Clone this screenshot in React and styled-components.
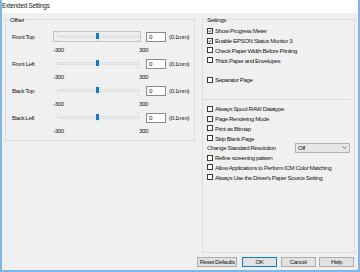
import styled, { createGlobalStyle } from "styled-components";

const GlobalStyle = createGlobalStyle`
  html, body { margin: 0; padding: 0; }
  body {
    background: #f0f0f0;
    font-family: "Liberation Sans", Arial, sans-serif;
  }
  * { box-sizing: border-box; }
`;

const offsets = ["Front Top", "Front Left", "Back Top", "Back Left"];

const topSettings = [
  { label: "Show Progress Meter", checked: true },
  { label: "Enable EPSON Status Monitor 3", checked: true },
  { label: "Check Paper Width Before Printing" },
  { label: "Thick Paper and Envelopes" },
  { spacer: true },
  { label: "Separator Page" },
];

const lowerSettings = [
  "Always Spool RAW Datatype",
  "Page Rendering Mode",
  "Print as Bitmap",
  "Skip Blank Page",
];

const lastSettings = [
  "Refine screening pattern",
  "Allow Applications to Perform ICM Color Matching",
  "Always Use the Driver's Paper Source Setting",
];

const Window = styled.div`
  width: 360px;
  height: 272px;
  display: flex;
  flex-direction: column;
  background: #f0f0f0;
  border: 2px solid #7cb6ea;
  border-top: none;
  color: #1a1a1a;
  font-size: 6.2px;
  letter-spacing: -0.42px;
`;

const TitleBar = styled.div`
  height: 13px;
  background: #fff;
  line-height: 12px;
  font-size: 6.4px;
  letter-spacing: -0.25px;
  white-space: nowrap;
`;

const Content = styled.div`
  flex: 1;
  display: flex;
  flex-direction: column;
  padding: 6px 3px 0 3px;
`;

const Panels = styled.div`
  display: flex;
  align-items: flex-start;
  gap: 7px;
`;

const Group = styled.div`
  position: relative;
  width: ${(p) => p.$w}px;
  height: ${(p) => p.$h}px;
  border: 1px solid #dcdcdc;
`;

const Caption = styled.span`
  position: absolute;
  top: -4.5px;
  left: 3px;
  padding: 0 1px;
  line-height: 8px;
  background: #f0f0f0;
`;

const OffsetList = styled.div`
  display: flex;
  flex-direction: column;
  gap: 4px;
  padding: 11px 0 0 6px;
`;

const OffsetItem = styled.div`
  display: flex;
  flex-direction: column;
  gap: 4px;
`;

const SliderRow = styled.div`
  display: flex;
  align-items: center;
  height: 11px;
`;

const RowLabel = styled.span`
  width: 41px;
  white-space: nowrap;
`;

const SliderBox = styled.div`
  width: 88px;
  height: 11px;
  border: 1px solid ${(p) => (p.$focused ? "#c6c6c6" : "transparent")};
  display: flex;

  svg {
    display: block;
  }
`;

const NumberBox = styled.input`
  width: 20px;
  height: 10px;
  margin: 0 0 0 5px;
  padding: 0 0 0 2px;
  border: 1px solid #8a8a8a;
  background: #fff;
  font: inherit;
  line-height: 8px;
  color: #1a1a1a;
  outline: none;
`;

const Unit = styled.span`
  margin-left: 3px;
  white-space: nowrap;
`;

const ScaleRow = styled.div`
  display: flex;
  justify-content: space-between;
  width: 95px;
  height: 8px;
  line-height: 8px;
  margin-left: 41px;
`;

const SettingsList = styled.div`
  display: flex;
  flex-direction: column;
  padding: 6px 4px 0 4px;
`;

const SettingRow = styled.div`
  display: flex;
  align-items: center;
  height: 9.75px;
  white-space: nowrap;
`;

const CheckBox = styled.span`
  width: 6px;
  height: 6px;
  margin-right: 2px;
  border: 1px solid #3a3a3a;
  background: #fff;
  display: flex;
  align-items: center;
  justify-content: center;
  flex-shrink: 0;

  svg {
    display: block;
  }
`;

const Divider = styled.div`
  height: 1px;
  background: #dcdcdc;
  margin: 14px 0 4.5px -4px;
`;

const Dropdown = styled.div`
  margin-left: auto;
  width: 55px;
  height: 10px;
  display: flex;
  align-items: center;
  justify-content: space-between;
  padding: 0 2px;
  background: #e6e6e6;
  border: 1px solid #b4b4b4;

  svg {
    display: block;
  }
`;

const ButtonBar = styled.div`
  display: flex;
  justify-content: flex-end;
  gap: 3.5px;
  margin-top: 4px;
  padding-right: 1px;
`;

const Button = styled.div`
  width: ${(p) => p.$w}px;
  height: 9.5px;
  margin-right: ${(p) => (p.$gapRight ? "1.5px" : "0")};
  display: flex;
  align-items: center;
  justify-content: center;
  white-space: nowrap;
  background: #e1e1e1;
  border: 1px solid ${(p) => (p.$primary ? "#0a7ad6" : "#adadad")};
`;

function Slider() {
  return (
    <svg width="86" height="9" viewBox="0 0 86 9">
      <rect x="3" y="3.5" width="82" height="2" fill="#e7eaea" stroke="#d4d4d4" strokeWidth="0.5" />
      <rect x="3" y="0" width="0.8" height="1" fill="#b8b8b8" />
      <rect x="84" y="0" width="0.8" height="1" fill="#b8b8b8" />
      <rect x="3" y="8" width="0.8" height="1" fill="#b8b8b8" />
      <rect x="43" y="8" width="0.8" height="1" fill="#b8b8b8" />
      <rect x="84" y="8" width="0.8" height="1" fill="#b8b8b8" />
      <rect x="42" y="1" width="3" height="6" fill="#0a7ad6" />
    </svg>
  );
}

function Check({ checked }) {
  return (
    <CheckBox>
      {checked && (
        <svg width="4" height="4" viewBox="0 0 4 4">
          <path d="M0.4 2 L1.5 3.1 L3.6 0.6" fill="none" stroke="#222" strokeWidth="0.8" />
        </svg>
      )}
    </CheckBox>
  );
}

function App() {
  return (
    <>
      <GlobalStyle />
      <Window>
        <TitleBar>Extended Settings</TitleBar>
        <Content>
          <Panels>
            <Group $w={190} $h={122}>
              <Caption>Offset</Caption>
              <OffsetList>
                {offsets.map((name, i) => (
                  <OffsetItem key={name}>
                    <SliderRow>
                      <RowLabel>{name}</RowLabel>
                      <SliderBox $focused={i === 0}>
                        <Slider />
                      </SliderBox>
                      <NumberBox readOnly value="0" />
                      <Unit>(0.1mm)</Unit>
                    </SliderRow>
                    <ScaleRow>
                      <span>-300</span>
                      <span>300</span>
                    </ScaleRow>
                  </OffsetItem>
                ))}
              </OffsetList>
            </Group>

            <Group $w={153} $h={234}>
              <Caption>Settings</Caption>
              <SettingsList>
                {topSettings.map((s, i) =>
                  s.spacer ? (
                    <SettingRow key={i} />
                  ) : (
                    <SettingRow key={i}>
                      <Check checked={s.checked} />
                      {s.label}
                    </SettingRow>
                  )
                )}
                <Divider />
                {lowerSettings.map((label) => (
                  <SettingRow key={label}>
                    <Check />
                    {label}
                  </SettingRow>
                ))}
                <SettingRow>
                  Change Standard Resolution
                  <Dropdown>
                    Off
                    <svg width="5" height="3" viewBox="0 0 5 3">
                      <polyline points="0.5,0.5 2.5,2.5 4.5,0.5" fill="none" stroke="#444" strokeWidth="0.7" />
                    </svg>
                  </Dropdown>
                </SettingRow>
                {lastSettings.map((label) => (
                  <SettingRow key={label}>
                    <Check />
                    {label}
                  </SettingRow>
                ))}
              </SettingsList>
            </Group>
          </Panels>

          <ButtonBar>
            <Button $w={40} $gapRight>Reset Defaults</Button>
            <Button $w={35} $primary>OK</Button>
            <Button $w={35}>Cancel</Button>
            <Button $w={35}>Help</Button>
          </ButtonBar>
        </Content>
      </Window>
    </>
  );
}

export default App;
